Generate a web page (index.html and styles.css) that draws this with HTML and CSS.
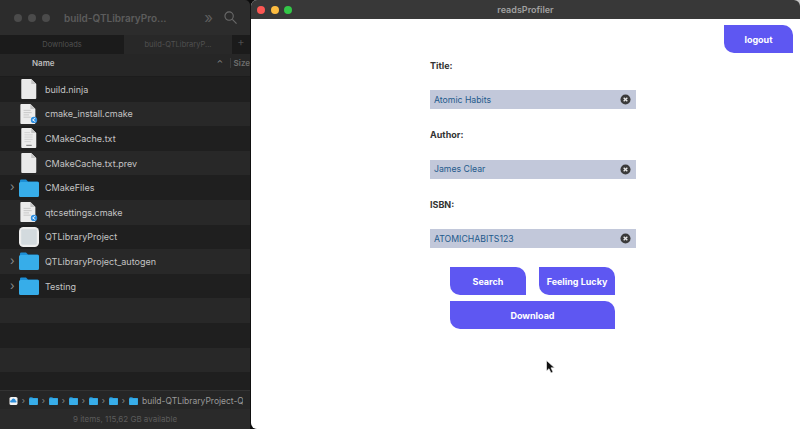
FILE: index.html
```html
<!DOCTYPE html>
<html lang="en">
<head>
    <meta charset="UTF-8">
    <title>readsProfiler</title>
    <link rel="stylesheet" href="styles.css">
</head>
<body>
    <svg class="defs" width="0" height="0">
        <symbol id="doc" viewBox="0 0 18 22">
            <path d="M1.500 0H11.500L17 5.500V21a1 1 0 0 1-1 1H1.500a1 1 0 0 1-1-1V1a1 1 0 0 1 1-1z" fill="#e9e9e9"/>
            <path d="M11.500 0V5.500H17z" fill="#c4c4c4"/>
        </symbol>
        <symbol id="cmake" viewBox="0 0 20 22">
            <path d="M1.500 0H11.500L17 5.500V21a1 1 0 0 1-1 1H1.500a1 1 0 0 1-1-1V1a1 1 0 0 1 1-1z" fill="#ececec"/>
            <path d="M11.500 0V5.500H17z" fill="#c4c4c4"/>
            <path d="M4 7h8M4 9.500h9M4 12h6M4 14.500h8" stroke="#c4c4c4" stroke-width="1"/>
            <circle cx="15.500" cy="17.500" r="3.500" fill="#2f8fe0"/>
            <path d="M17 15.500l-3 2 3 2" stroke="#fff" stroke-width="1" fill="none"/>
        </symbol>
        <symbol id="txt" viewBox="0 0 18 22">
            <path d="M1.500 0H11.500L17 5.500V21a1 1 0 0 1-1 1H1.500a1 1 0 0 1-1-1V1a1 1 0 0 1 1-1z" fill="#ececec"/>
            <path d="M11.500 0V5.500H17z" fill="#c4c4c4"/>
            <path d="M4 5h6M4 7.500h9M4 10h9M4 12.500h9M4 15h7" stroke="#cfcfcf" stroke-width="1"/>
            <path d="M6 19h6" stroke="#8a8a8a" stroke-width="1.400"/>
        </symbol>
        <symbol id="folder" viewBox="0 0 20 18">
            <path d="M1 3V1.800A1.300 1.300 0 0 1 2.300.5H7l2 2h9.500A1.500 1.500 0 0 1 20 4v2H1z" fill="#1c8fd6"/>
            <path d="M0 4.500A1.500 1.500 0 0 1 1.500 3H18.500A1.500 1.500 0 0 1 20 4.500V16.500A1.500 1.500 0 0 1 18.500 18H1.500A1.500 1.500 0 0 1 0 16.500z" fill="#37ade9"/>
        </symbol>
        <symbol id="app" viewBox="0 0 18 18">
            <rect width="18" height="18" rx="4" fill="#eeeeee"/>
            <rect x="2" y="2" width="14" height="14" rx="1" fill="#d3dade"/>
        </symbol>
        <symbol id="clear" viewBox="0 0 12 12">
            <circle cx="6" cy="6" r="5.500" fill="#3a3a3a"/>
            <path d="M4 4l4 4M8 4l-4 4" stroke="#e8e8e8" stroke-width="1.500"/>
        </symbol>
    </svg>

    <div class="finder">
        <div class="finder-title">
            <span class="light"></span>
            <span class="light"></span>
            <span class="light"></span>
            <span class="finder-name">build-QTLibraryPro...</span>
            <span class="more">»</span>
            <svg class="search" viewBox="0 0 14 14"><circle cx="5.500" cy="5.500" r="4.500"/><path d="M9 9l4.500 4.500"/></svg>
        </div>
        <div class="tabs">
            <div class="tab tab-off">Downloads</div>
            <div class="tab tab-on">build-QTLibraryP...</div>
            <div class="tab-add">+</div>
        </div>
        <div class="cols">
            <span class="col-name">Name</span>
            <span class="col-arrow">⌃</span>
            <span class="col-size">Size</span>
        </div>
        <div class="rows">
            <div class="row"><svg class="ico"><use href="#doc"/></svg><span>build.ninja</span></div>
            <div class="row"><svg class="ico"><use href="#cmake"/></svg><span>cmake_install.cmake</span></div>
            <div class="row"><svg class="ico"><use href="#txt"/></svg><span>CMakeCache.txt</span></div>
            <div class="row"><svg class="ico"><use href="#doc"/></svg><span>CMakeCache.txt.prev</span></div>
            <div class="row has-arrow"><svg class="ico"><use href="#folder"/></svg><span>CMakeFiles</span></div>
            <div class="row"><svg class="ico"><use href="#cmake"/></svg><span>qtcsettings.cmake</span></div>
            <div class="row"><svg class="ico"><use href="#app"/></svg><span>QTLibraryProject</span></div>
            <div class="row has-arrow"><svg class="ico"><use href="#folder"/></svg><span>QTLibraryProject_autogen</span></div>
            <div class="row has-arrow"><svg class="ico"><use href="#folder"/></svg><span>Testing</span></div>
            <div class="row"></div>
            <div class="row"></div>
            <div class="row"></div>
            <div class="row"></div>
        </div>
        <div class="path">
            <svg class="crumb" viewBox="0 0 10 10"><rect width="10" height="10" rx="2" fill="#f2f2f2"/><path d="M2 7a1.500 1.500 0 0 1 .5-3 2.500 2.500 0 0 1 5 .5A1.300 1.300 0 0 1 8 7z" fill="#2d8fdc"/></svg>
            <i>›</i><svg class="crumb"><use href="#folder"/></svg>
            <i>›</i><svg class="crumb"><use href="#folder"/></svg>
            <i>›</i><svg class="crumb"><use href="#folder"/></svg>
            <i>›</i><svg class="crumb"><use href="#folder"/></svg>
            <i>›</i><svg class="crumb"><use href="#folder"/></svg>
            <i>›</i><svg class="crumb"><use href="#folder"/></svg>
            <span class="path-name">build-QTLibraryProject-Qt_6</span>
        </div>
        <div class="status">9 items, 115,62 GB available</div>
    </div>

    <div class="window">
        <div class="window-title">
            <span class="dot dot-red"></span>
            <span class="dot dot-yellow"></span>
            <span class="dot dot-green"></span>
            <span class="window-name">readsProfiler</span>
        </div>
        <div class="content">
            <div class="top">
                <button class="btn btn-logout">logout</button>
            </div>
            <div class="form">
                <label class="lbl">Title:</label>
                <div class="field"><span>Atomic Habits</span><svg class="clear"><use href="#clear"/></svg></div>
                <label class="lbl">Author:</label>
                <div class="field"><span>James Clear</span><svg class="clear"><use href="#clear"/></svg></div>
                <label class="lbl">ISBN:</label>
                <div class="field"><span>ATOMICHABITS123</span><svg class="clear"><use href="#clear"/></svg></div>
                <div class="actions">
                    <button class="btn">Search</button>
                    <button class="btn">Feeling Lucky</button>
                    <button class="btn btn-wide">Download</button>
                </div>
            </div>
            <svg class="pointer" viewBox="0 0 9 14"><path d="M.5.500V11l2.500-2.300L5 13l2-1-2-4.200h3.500z" fill="#111" stroke="#fff" stroke-width=".6"/></svg>
        </div>
    </div>
</body>
</html>
```
FILE: styles.css
```css
* {
    margin: 0;
    padding: 0;
    box-sizing: border-box;
}
html, body {
    height: 100%;
    overflow: hidden;
}
body {
    background: linear-gradient(to right, #0c0c0c 50%, #c8c8c8 50%);
    display: flex;
    font-family: Inter, "Liberation Sans", sans-serif;
}
.defs {
    position: absolute;
}

/* finder */
.finder {
    width: 251px;
    height: 429px;
    background-color: #262626;
    border-radius: 0 6px 0 0;
    display: flex;
    flex-direction: column;
    flex-shrink: 0;
    border-right: 1px solid #111;
    overflow: hidden;
}
.finder-title {
    height: 35px;
    display: flex;
    align-items: center;
    padding: 0 13px 0 14px;
    background-color: #2c2c2c;
}
.light {
    width: 8px;
    height: 8px;
    border-radius: 50%;
    background-color: #4b4b4b;
    margin-right: 6px;
}
.finder-name {
    font-size: 10px;
    font-weight: 600;
    color: #5c5c5c;
    margin-left: 8px;
    flex: 1;
    white-space: nowrap;
}
.more {
    color: #5e5e5e;
    font-size: 15px;
    margin-right: 11px;
}
.search {
    width: 13px;
    height: 13px;
    fill: none;
    stroke: #6a6a6a;
    stroke-width: 1.200;
}
.tabs {
    height: 19px;
    display: flex;
    font-size: 7.500px;
    color: #505050;
    background-color: #1b1b1b;
}
.tab {
    display: flex;
    align-items: center;
    justify-content: center;
}
.tab-off {
    width: 124px;
}
.tab-on {
    width: 108px;
    background-color: #282828;
}
.tab-add {
    flex: 1;
    text-align: center;
    font-size: 11px;
    color: #4d4d4d;
}
.cols {
    height: 23px;
    display: flex;
    align-items: center;
    padding-bottom: 5px;
    background-color: #262626;
    border-bottom: 1px solid #1c1c1c;
    font-size: 8px;
    font-weight: 600;
    color: #bcbcbc;
    padding-left: 32px;
}
.col-name {
    width: 188px;
}
.col-arrow {
    width: 13px;
    color: #8a8a8a;
    font-weight: 400;
}
.col-size {
    color: #6e6e6e;
    padding-left: 3px;
    border-left: 1px solid #3a3a3a;
}
.rows {
    flex: 1;
    overflow: hidden;
}
.row {
    height: 24.600px;
    display: flex;
    align-items: center;
    padding-left: 19px;
    font-size: 9px;
    color: #c4c4c4;
    background-color: #1f1f1f;
    position: relative;
    white-space: nowrap;
}
.row:nth-child(even) {
    background-color: #282828;
}
.has-arrow::before {
    content: '›';
    position: absolute;
    left: 10px;
    top: 4px;
    color: #8a8a8a;
    font-size: 12px;
}
.ico {
    width: 20px;
    height: 20px;
    margin-right: 6px;
}
.path {
    height: 19px;
    display: flex;
    align-items: center;
    padding: 1px 7px 0 9px;
    background-color: #262626;
    border-top: 1px solid #333;
    color: #8a8a8a;
    font-size: 8.500px;
    white-space: nowrap;
    overflow: hidden;
}
.path i {
    font-style: normal;
    width: 11px;
    flex-shrink: 0;
    text-align: center;
}
.crumb {
    width: 9px;
    height: 8px;
    flex-shrink: 0;
}
.path-name {
    margin-left: 4px;
    color: #9a9a9a;
    min-width: 0;
    overflow: hidden;
}
.status {
    height: 20px;
    display: flex;
    align-items: center;
    justify-content: center;
    font-size: 8px;
    color: #5c5c5c;
    background-color: #2a2a2a;
}

/* app window */
.window {
    flex: 1;
    height: 429px;
    display: flex;
    flex-direction: column;
    background-color: #fff;
    border-radius: 6px 6px 0 6px;
    overflow: hidden;
}
.window-title {
    height: 19px;
    display: flex;
    align-items: center;
    padding-left: 6px;
    background-color: #383838;
    position: relative;
}
.dot {
    width: 8px;
    height: 8px;
    border-radius: 50%;
    margin-right: 5.500px;
}
.dot-red {
    background-color: #fc5753;
}
.dot-yellow {
    background-color: #fdbc40;
}
.dot-green {
    background-color: #33c748;
}
.window-name {
    position: absolute;
    left: 0;
    right: 0;
    text-align: center;
    font-size: 9px;
    font-weight: 600;
    color: #a0a0a0;
}
.content {
    flex: 1;
    position: relative;
}
.top {
    display: flex;
    justify-content: flex-end;
    padding: 6px 7px 0 0;
}
.form {
    width: 206px;
    margin: 5.500px 0 0 179px;
}
.lbl {
    display: block;
    height: 14px;
    margin-bottom: 17.500px;
    font-size: 9px;
    font-weight: 700;
    color: #333;
    line-height: 14px;
}
.field {
    height: 19px;
    background-color: #c2c8da;
    display: flex;
    align-items: center;
    justify-content: space-between;
    padding: 0 5px 0 4px;
    font-size: 8.700px;
    color: #1f5a8c;
    margin-bottom: 19px;
}
.clear {
    width: 11px;
    height: 11px;
}
.actions {
    display: grid;
    grid-template-columns: 76px 76px;
    justify-content: space-between;
    row-gap: 6px;
    width: 165px;
    margin: 10px 0 0 20px;
}
.btn {
    height: 28px;
    border: none;
    background-color: #5e57f2;
    color: #fff;
    font-family: Inter, "Liberation Sans", sans-serif;
    font-size: 9px;
    font-weight: 700;
    border-radius: 0 10px 0 10px;
}
.btn-wide {
    grid-column: 1 / 3;
}
.btn-logout {
    width: 69px;
}
.pointer {
    position: absolute;
    left: 295px;
    top: 341px;
    width: 9px;
    height: 14px;
}
```
